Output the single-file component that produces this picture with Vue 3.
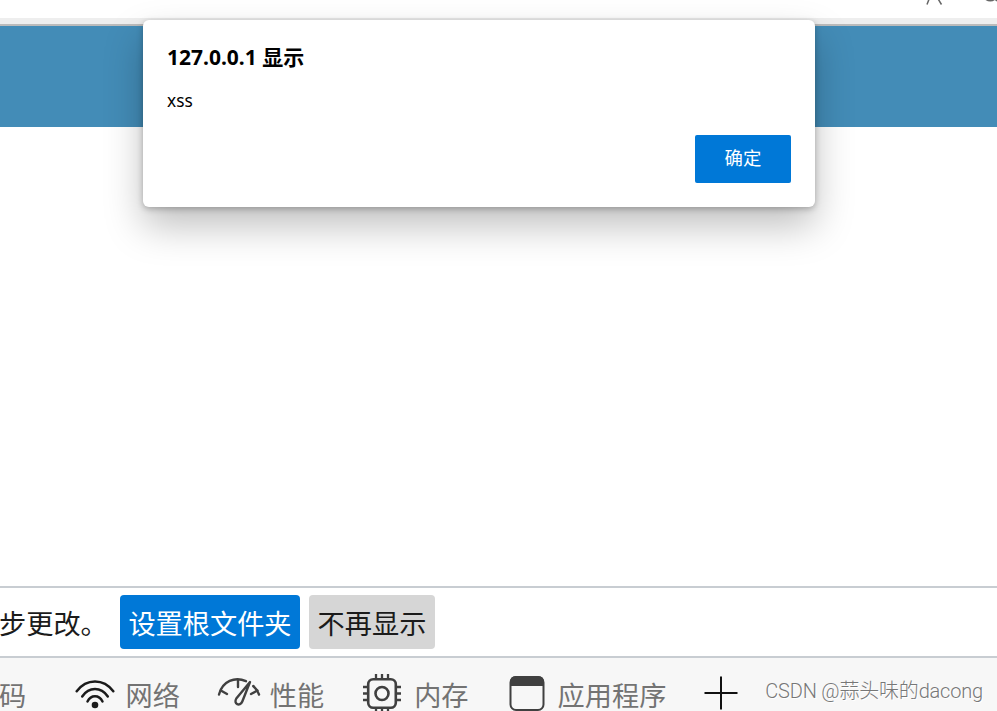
<script setup>
const tabs = [
  { icon: 'network', label: '网络' },
  { icon: 'performance', label: '性能' },
  { icon: 'memory', label: '内存' },
  { icon: 'application', label: '应用程序' }
];
</script>

<template>
  <div class="screen">
    <div class="toolbar">
      <svg class="toolbar-icons" width="80" height="18" viewBox="0 0 80 18" fill="none" stroke="#666" stroke-width="1.5">
        <path d="M12.5 -2 L10 4.5 M20.5 -2 L24.5 4.5" />
        <path d="M67 -2 Q73 3 78 -1 L80 1" />
      </svg>
    </div>
    <div class="page-header"></div>
    <main class="page-body"></main>

    <div class="infobar">
      <span class="infobar-text">步更改。</span>
      <button class="infobar-btn primary">设置根文件夹</button>
      <button class="infobar-btn">不再显示</button>
    </div>

    <nav class="tabs">
      <span class="tab-cut">码</span>
      <div v-for="tab in tabs" :key="tab.icon" class="tab" :class="tab.icon">
        <svg v-if="tab.icon === 'network'" width="40" height="40" viewBox="0 0 40 40" fill="none" stroke="#1b1b1b" stroke-width="2.5" stroke-linecap="round">
          <path d="M1.7 18.2 C11.5 5.2 28.5 5.2 38.3 18.2" />
          <path d="M7.2 23.5 C14 13.6 26 13.6 32.8 23.5" />
          <path d="M12.5 28.5 C16 21.5 24 21.5 27.5 28.5" />
          <circle cx="20" cy="32" r="3.3" fill="#1b1b1b" stroke="none" />
        </svg>
        <svg v-else-if="tab.icon === 'performance'" width="44" height="40" viewBox="0 0 44 40" fill="none" stroke="#404040" stroke-width="2.4" stroke-linecap="round" stroke-linejoin="round">
          <path d="M2 21.5 C5.5 8 18 3.2 29 8.2" />
          <path d="M36.2 13 Q40.5 17 42 21.5" />
          <path d="M3.8 17.5 L10 21 M21 7 V14 M40.5 17.5 L34 21" />
          <path d="M33 9 L19.3 25.5 C16 31 23 34 25.3 28.5 Z" />
        </svg>
        <svg v-else-if="tab.icon === 'memory'" width="40" height="40" viewBox="0 0 40 40" fill="none" stroke="#404040" stroke-width="2.3">
          <rect x="6.2" y="6.2" width="27.6" height="28.6" rx="5" stroke-width="2.6" />
          <circle cx="20" cy="20.5" r="6.5" stroke-width="2.6" />
          <path d="M14 1 V6 M20 1 V6 M26 1 V6 M14 35 V40 M20 35 V40 M26 35 V40" />
          <path d="M1 14 H6 M1 20.5 H6 M1 27 H6 M34 14 H39 M34 20.5 H39 M34 27 H39" />
        </svg>
        <svg v-else width="36" height="40" viewBox="0 0 36 40" fill="none" stroke="#404040" stroke-width="2">
          <rect x="1.5" y="4" width="33" height="33" rx="5.5" />
          <path d="M1 13 V9 Q1 3 7 3 H29 Q35 3 35 9 V13 Z" fill="#404040" stroke="none" />
        </svg>
        <span>{{ tab.label }}</span>
      </div>
      <svg class="plus" width="34" height="40" viewBox="0 0 34 40" stroke="#111" stroke-width="2">
        <path d="M0.5 20 H33.5 M17 3.5 V36.5" />
      </svg>
      <span class="watermark">CSDN @蒜头味的dacong</span>
    </nav>

    <div class="dialog" role="alertdialog">
      <h1>127.0.0.1 显示</h1>
      <p>xss</p>
      <button class="ok">确定</button>
    </div>
  </div>
</template>

<style>
body {
  margin: 0;
}
</style>

<style scoped>
.screen {
  position: relative;
  display: flex;
  flex-direction: column;
  width: 997px;
  height: 711px;
  overflow: hidden;
  background: #fff;
  font-family: "Noto Sans", "Noto Sans CJK SC", sans-serif;
}

button {
  border: 0;
  padding: 0;
  font-family: inherit;
}

.toolbar {
  flex: none;
  display: flex;
  justify-content: flex-end;
  height: 18px;
}

.toolbar-icons {
  display: block;
}

.page-header {
  flex: none;
  box-sizing: border-box;
  height: 103px;
  margin-top: 6px;
  border-top: 2px solid #bbb;
  background: #438cb7;
  box-shadow: 0 -6px 0 #eee;
}

.page-body {
  flex: 1;
}

.infobar {
  flex: none;
  box-sizing: border-box;
  display: flex;
  align-items: center;
  height: 72px;
  border-top: 2px solid #c8cdd2;
  border-bottom: 2px solid #c8cdd2;
  font-family: "Noto Sans CJK SC", sans-serif;
  font-size: 27.2px;
  color: #1b1b1b;
}

.infobar-text {
  width: 120px;
  margin-left: -1px;
  margin-right: 1px;
  white-space: nowrap;
}

.infobar-btn {
  width: 126px;
  height: 54px;
  border-radius: 4px;
  background: #d6d6d6;
  color: #1b1b1b;
  font-size: 27.2px;
  line-height: 55px;
  white-space: nowrap;
}

.infobar-btn.primary {
  width: 180px;
  margin-right: 9px;
  background: #0078d7;
  color: #fff;
}

.tabs {
  flex: none;
  display: flex;
  align-items: flex-start;
  height: 38px;
  padding-top: 15px;
  background: #f7f7f7;
  font-family: "Noto Sans CJK SC", sans-serif;
  font-size: 27.2px;
  line-height: 42px;
  color: #737373;
  white-space: nowrap;
}

.tab-cut {
  width: 27px;
  margin-left: -1px;
  margin-right: 48.6px;
}

.tab {
  display: flex;
  gap: 11px;
}

.tab svg,
.plus {
  flex: none;
  display: block;
}

.network {
  margin-right: 36.8px;
}

.performance {
  gap: 9px;
  margin-right: 38px;
}

.memory {
  gap: 12px;
  margin-right: 40px;
}

.application {
  gap: 13px;
}

.plus {
  margin-left: 38px;
}

.watermark {
  margin-left: 27px;
  font-family: Roboto, "Noto Sans CJK SC", sans-serif;
  font-size: 20px;
  font-weight: 300;
  letter-spacing: -0.2px;
  line-height: 37px;
  color: #777;
  text-shadow: 1px 1px 0 #fff;
}

.dialog {
  position: absolute;
  top: 20px;
  left: 143px;
  box-sizing: border-box;
  display: flex;
  flex-direction: column;
  width: 672px;
  height: 187px;
  padding: 24px;
  border-radius: 6px;
  background: #fff;
  box-shadow: 0 2px 6px rgba(0, 0, 0, 0.26), 0 19px 38px rgba(0, 0, 0, 0.25);
}

.dialog h1 {
  margin: 0;
  font-size: 21px;
  font-weight: 700;
  line-height: 26px;
  color: #000;
}

.dialog p {
  margin: 19px 0 0;
  font-size: 17.3px;
  line-height: 24px;
  color: #000;
}

.ok {
  align-self: flex-end;
  width: 96px;
  height: 48px;
  padding-bottom: 2px;
  margin-top: auto;
  border-radius: 2px;
  background: #0078d7;
  color: #fff;
  font-size: 18.4px;
  line-height: 46px;
}
</style>
